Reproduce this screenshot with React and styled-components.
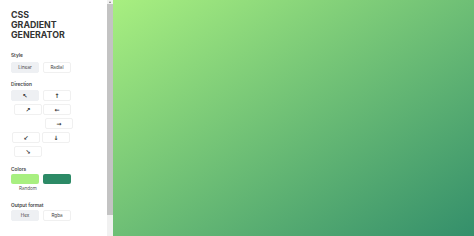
import React, { useState } from "react";
import styled, { createGlobalStyle } from "styled-components";

const GlobalStyle = createGlobalStyle`
  html, body {
    margin: 0;
    padding: 0;
    height: 100%;
    overflow: hidden;
  }
  body {
    font-family: "Inter", "Liberation Sans", sans-serif;
    color: #2d2d2d;
  }
`;

const Page = styled.div`
  display: flex;
  width: 474px;
  height: 236px;
`;

const Sidebar = styled.aside`
  width: 107px;
  flex-shrink: 0;
  height: 236px;
  overflow: hidden;
  background: #fff;
`;

const ScrollTrack = styled.div`
  width: 6px;
  flex-shrink: 0;
  background: #f1f1f1;
  display: flex;
  flex-direction: column;
  align-items: center;
`;

const ScrollArrow = styled.div`
  width: 0;
  height: 0;
  margin: 1px 0 1px;
  border-left: 1.5px solid transparent;
  border-right: 1.5px solid transparent;
  border-bottom: 2px solid #7a7a7a;
`;

const ScrollThumb = styled.div`
  width: 6px;
  height: 211px;
  background: #c3c3c3;
`;

const SidebarInner = styled.div`
  padding: 10px 0 20px 11px;
`;

const Title = styled.h1`
  margin: 0 0 12px;
  font-size: 8.8px;
  line-height: 10px;
  font-weight: 700;
  color: #333;
`;

const Label = styled.div`
  font-size: 4.8px;
  line-height: 6px;
  font-weight: 600;
  color: #444;
  margin-bottom: ${(p) => p.gap || 2}px;
`;

const Section = styled.section`
  margin-bottom: ${(p) => p.mb || 10}px;
`;

const Row = styled.div`
  display: flex;
  gap: 4px;
`;

const Grid = styled.div`
  display: grid;
  grid-template-columns: 28px 28px;
  column-gap: 4px;
  row-gap: 3px;
`;

const Btn = styled.button`
  width: 28px;
  height: 11px;
  padding: 0;
  border: 1px solid ${(p) => (p.active ? "#eef0f3" : "#f0f0f0")};
  border-radius: 2px;
  background: ${(p) => (p.active ? "#eef0f3" : "#fff")};
  font-family: inherit;
  font-size: 4.6px;
  color: #444;
  display: flex;
  align-items: center;
  justify-content: center;
  margin-left: ${(p) => p.shift || 0}px;
`;

const Arrow = styled.span`
  font-family: "DejaVu Sans", sans-serif;
  font-size: 6px;
  font-weight: 700;
  color: #333;
`;

const Swatch = styled.div`
  width: 28px;
  height: 10px;
  border-radius: 2px;
  background: ${(p) => p.color};
`;

const Random = styled.div`
  width: 28px;
  text-align: center;
  font-size: 4.6px;
  line-height: 6px;
  color: #555;
  margin-top: 2px;
  margin-left: 3px;
`;

const Preview = styled.main`
  flex: 1;
  background: linear-gradient(to bottom right, #a8ef80, #348f6b);
`;

const directions = [
  { k: "tl", a: "↖", shift: 0 },
  { k: "t", a: "↑", shift: 0 },
  { k: "tr", a: "↗", shift: 3 },
  { k: "l", a: "←", shift: 0 },
  { k: "c", a: null },
  { k: "r", a: "→", shift: 2 },
  { k: "bl", a: "↙", shift: 1 },
  { k: "b", a: "↓", shift: -1 },
  { k: "br", a: "↘", shift: 3 },
];

export default function App() {
  const [dir, setDir] = useState("tl");
  const [style, setStyle] = useState("linear");
  const [format, setFormat] = useState("hex");

  return (
    <>
      <GlobalStyle />
      <Page>
        <Sidebar>
          <SidebarInner>
            <Title>
              CSS
              <br />
              GRADIENT
              <br />
              GENERATOR
            </Title>

            <Section mb={8}>
              <Label gap={4}>Style</Label>
              <Row>
                <Btn active={style === "linear"} onClick={() => setStyle("linear")}>
                  Linear
                </Btn>
                <Btn active={style === "radial"} onClick={() => setStyle("radial")}>
                  Radial
                </Btn>
              </Row>
            </Section>

            <Section mb={9}>
              <Label gap={3}>Direction</Label>
              <Grid>
                {directions.map((d) =>
                  d.a ? (
                    <Btn
                      key={d.k}
                      shift={d.shift}
                      active={dir === d.k}
                      onClick={() => setDir(d.k)}
                    >
                      <Arrow>{d.a}</Arrow>
                    </Btn>
                  ) : (
                    <div key={d.k} />
                  )
                )}
              </Grid>
            </Section>

            <Section mb={10}>
              <Label gap={2}>Colors</Label>
              <Row>
                <Swatch color="#a8ef80" />
                <Swatch color="#2c8a66" />
              </Row>
              <Random>Random</Random>
            </Section>

            <Section>
              <Label gap={2}>Output format</Label>
              <Row>
                <Btn active={format === "hex"} onClick={() => setFormat("hex")}>
                  Hex
                </Btn>
                <Btn active={format === "rgba"} onClick={() => setFormat("rgba")}>
                  Rgba
                </Btn>
              </Row>
            </Section>
          </SidebarInner>
        </Sidebar>
        <ScrollTrack>
          <ScrollArrow />
          <ScrollThumb />
        </ScrollTrack>
        <Preview />
      </Page>
    </>
  );
}
